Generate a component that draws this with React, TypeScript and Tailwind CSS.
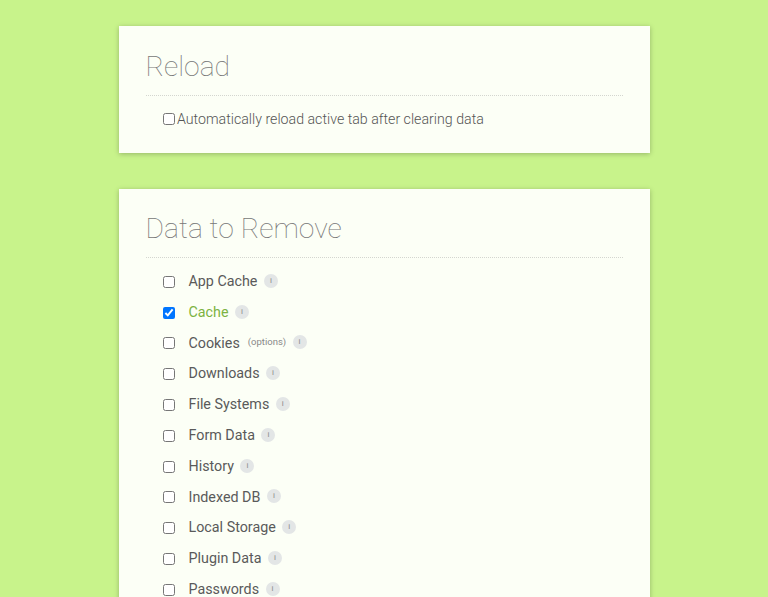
const items = [
  { name: 'App Cache' },
  { name: 'Cache', checked: true },
  { name: 'Cookies', options: true },
  { name: 'Downloads' },
  { name: 'File Systems' },
  { name: 'Form Data' },
  { name: 'History' },
  { name: 'Indexed DB' },
  { name: 'Local Storage' },
  { name: 'Plugin Data' },
  { name: 'Passwords' },
]

function InfoBadge() {
  return (
    <span className="ml-[6.5px] mb-[2px] flex h-[14px] w-[14px] items-center justify-center rounded-full bg-[#e3e6e6] text-[8px] leading-none text-[#8a8a8a]">
      i
    </span>
  )
}

export default function App() {
  return (
    <div
      className="h-[597px] overflow-hidden bg-[#c8f38b] pt-[26px] text-[#555]"
      style={{ fontFamily: 'Roboto, sans-serif' }}
    >
      {/* Reload */}
      <section className="mx-auto h-[127px] w-[531px] bg-[#fcfff6] px-[27px] shadow-[0_1px_5px_rgba(0,0,0,0.25)]">
        <h2 className="border-b border-dotted border-[#d4d6d0] pt-[22px] pb-[9px] text-[28.3px] leading-[38px] font-thin text-[#777]">
          Reload
        </h2>
        <label className="mt-[14px] ml-[17px] flex items-center text-[14.2px] leading-[18px] font-light text-[#555]">
          <input type="checkbox" className="mr-[2.5px] h-[12px] w-[12px]" />
          Automatically reload active tab after clearing data
        </label>
      </section>

      {/* Data to Remove */}
      <section className="mx-auto mt-[36px] h-[500px] w-[531px] bg-[#fcfff6] px-[27px] shadow-[0_1px_5px_rgba(0,0,0,0.25)]">
        <h2 className="border-b border-dotted border-[#d4d6d0] pt-[21px] pb-[9px] text-[28.3px] leading-[38px] font-thin text-[#777]">
          Data to Remove
        </h2>
        <ul className="mt-[8.4px] ml-[17px]">
          {items.map((item) => (
            <li key={item.name} className="flex h-[30.8px] items-center">
              <input
                type="checkbox"
                defaultChecked={item.checked}
                className="mr-[14px] h-[12px] w-[12px]"
              />
              <span
                className={
                  item.checked
                    ? 'text-[14.3px] text-[#7cb342]'
                    : 'text-[14.3px] text-[#5a5a5a]'
                }
              >
                {item.name}
              </span>
              {item.options && (
                <span className="ml-[8px] mb-[2px] text-[9.5px] text-[#888]">(options)</span>
              )}
              <InfoBadge />
            </li>
          ))}
        </ul>
      </section>
    </div>
  )
}
